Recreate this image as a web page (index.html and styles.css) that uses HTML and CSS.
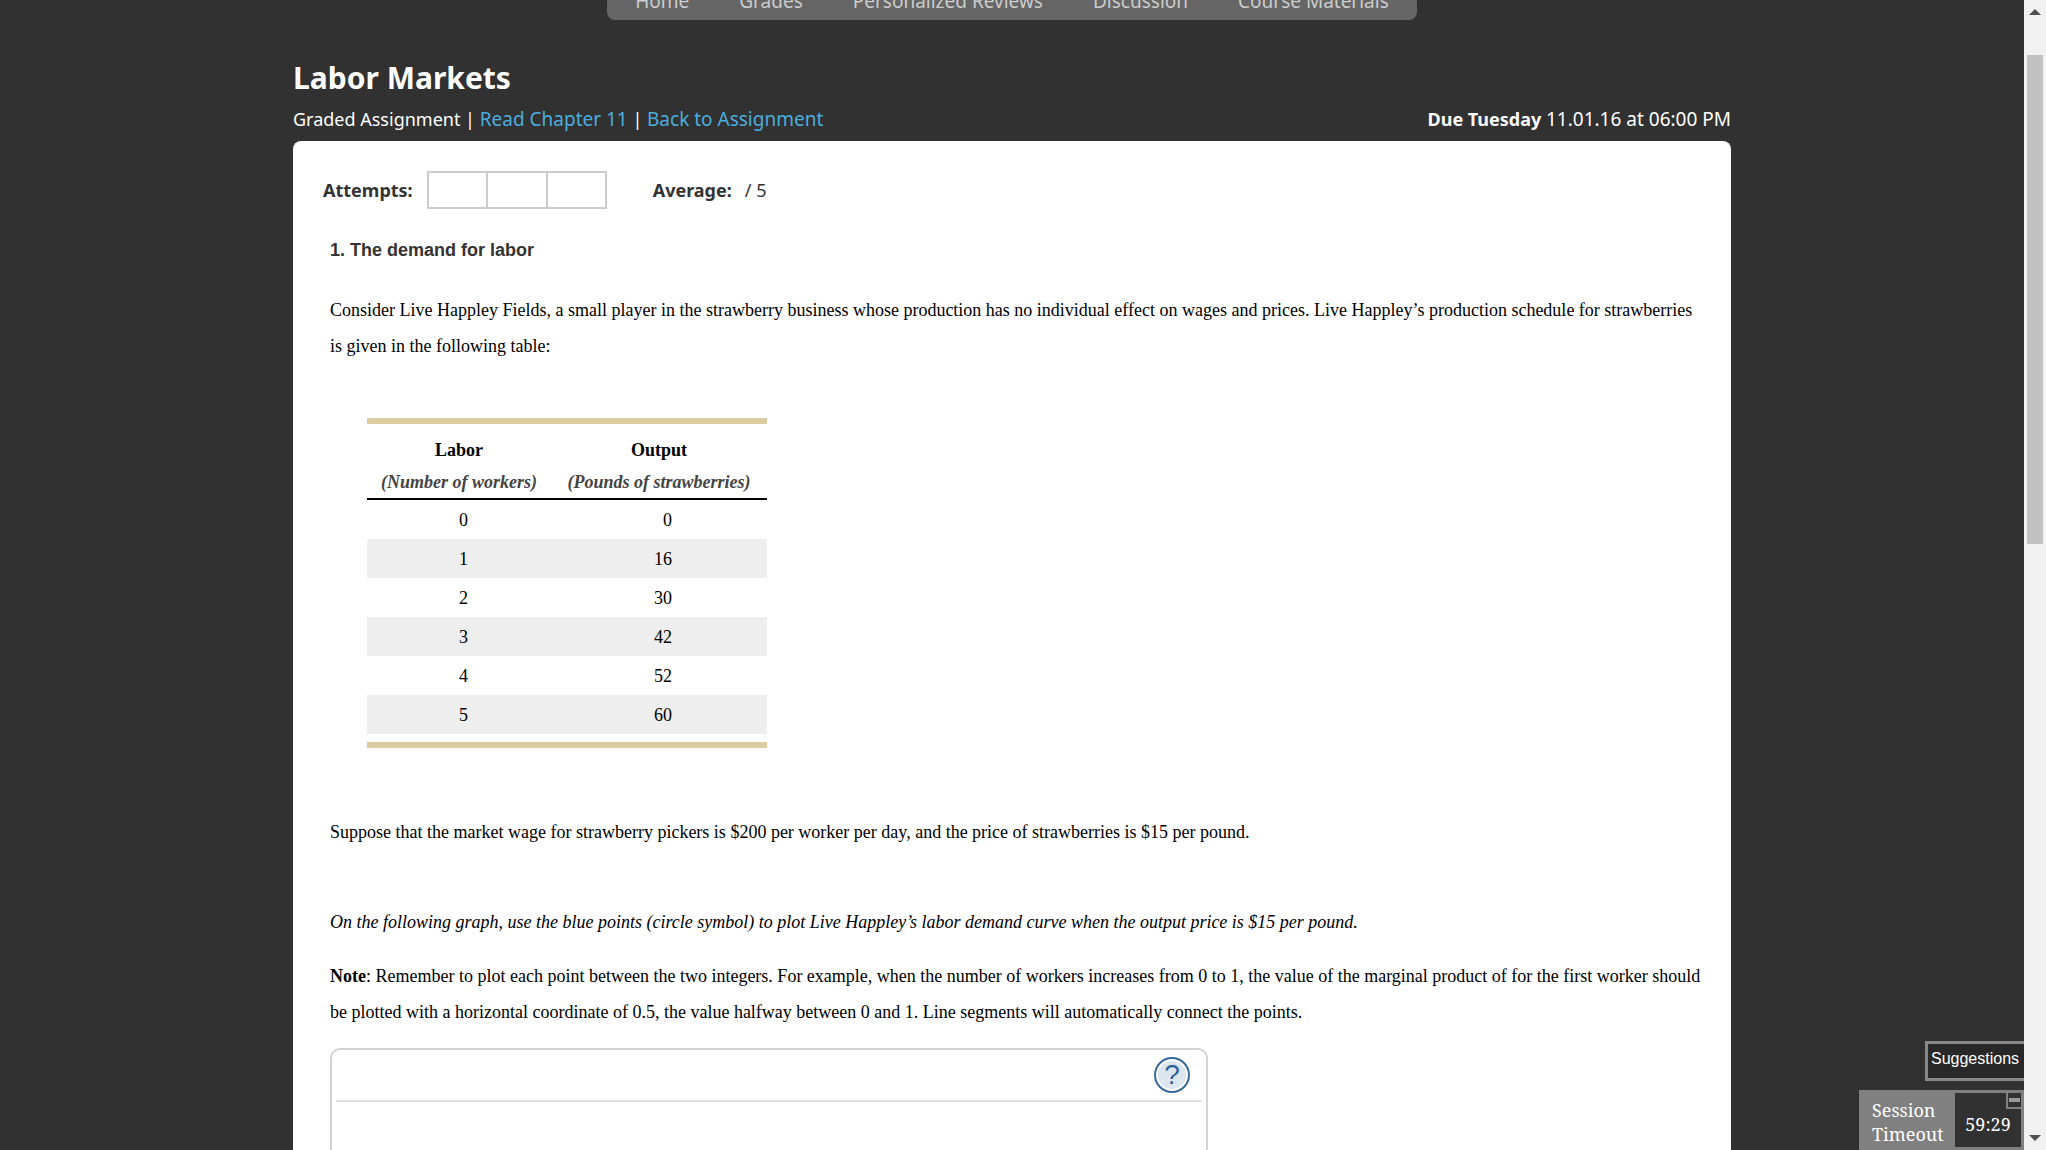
FILE: index.html
```html
<!DOCTYPE html>
<html lang="en">
<head>
    <meta charset="UTF-8">
    <title>Labor Markets</title>
    <link rel="stylesheet" href="styles.css">
</head>
<body>
    <div class="page">
        <nav class="main-nav">
            <a href="#">Home</a>
            <a href="#">Grades</a>
            <a href="#">Personalized Reviews</a>
            <a href="#">Discussion</a>
            <a href="#">Course Materials</a>
        </nav>

        <div class="container">
            <header class="assignment-header">
                <h1>Labor Markets</h1>
                <div class="assignment-info">
                    <div>Graded Assignment | <a href="#">Read Chapter 11</a> | <a href="#">Back to Assignment</a></div>
                    <div><strong>Due Tuesday</strong> <span class="due-date">11.01.16 at 06:00 PM</span></div>
                </div>
            </header>

            <main class="panel">
                <div class="score">
                    <span class="score-label">Attempts:</span>
                    <div class="attempts">
                        <span></span>
                        <span></span>
                        <span></span>
                    </div>
                    <span class="score-label">Average:</span>
                    <span class="average">/ 5</span>
                </div>

                <div class="question">
                    <h2>1. The demand for labor</h2>
                    <p>Consider Live Happley Fields, a small player in the strawberry business whose production has no individual effect on wages and prices. Live Happley’s production schedule for strawberries is given in the following table:</p>

                    <table>
                        <thead>
                            <tr>
                                <th>Labor<em>(Number of workers)</em></th>
                                <th>Output<em>(Pounds of strawberries)</em></th>
                            </tr>
                        </thead>
                        <tbody>
                            <tr><td>0</td><td>0</td></tr>
                            <tr><td>1</td><td>16</td></tr>
                            <tr><td>2</td><td>30</td></tr>
                            <tr><td>3</td><td>42</td></tr>
                            <tr><td>4</td><td>52</td></tr>
                            <tr><td>5</td><td>60</td></tr>
                        </tbody>
                    </table>

                    <p class="setup">Suppose that the market wage for strawberry pickers is $200 per worker per day, and the price of strawberries is $15 per pound.</p>
                    <p><em>On the following graph, use the blue points (circle symbol) to plot Live Happley’s labor demand curve when the output price is $15 per pound.</em></p>
                    <p><strong>Note</strong>: Remember to plot each point between the two integers. For example, when the number of workers increases from 0 to 1, the value of the marginal product of for the first worker should be plotted with a horizontal coordinate of 0.5, the value halfway between 0 and 1. Line segments will automatically connect the points.</p>

                    <section class="graph">
                        <div class="graph-toolbar">
                            <button type="button" class="help">?</button>
                        </div>
                    </section>
                </div>
            </main>
        </div>

        <button type="button" class="suggestions">Suggestions</button>
        <div class="session">
            <div class="session-label">Session<br>Timeout</div>
            <div class="session-time">59:29
                <button type="button" class="minimize" aria-label="Minimize"></button>
            </div>
        </div>
    </div>

    <div class="scrollbar">
        <svg width="12" height="6" viewBox="0 0 12 6"><path d="M6 0l6 6H0z"/></svg>
        <div class="scroll-track"><div class="scroll-thumb"></div></div>
        <svg width="12" height="6" viewBox="0 0 12 6"><path d="M6 6l6-6H0z"/></svg>
    </div>
</body>
</html>
```

FILE: styles.css
```css
* { box-sizing: border-box; }
body { margin: 0; height: 100vh; display: flex; overflow: hidden; background-color: #313131; font-family: "Noto Sans", sans-serif; font-size: 18px; color: #fff; }
a { color: #4badde; text-decoration: none; }
button { font: inherit; padding: 0; cursor: pointer; }

.page { flex: 1; position: relative; overflow: hidden; }

/* navigation is partly scrolled out of view */
.main-nav { width: fit-content; margin: -24px auto 0; padding: 9px 28px 3px; display: flex; gap: 50px; font-size: 19px; line-height: 32px; background-color: #666; border-radius: 0 0 8px 8px; }
.main-nav a { color: #ccc; }

.container { width: 95%; max-width: 1438px; margin: 0 auto; }
.assignment-header { padding-top: 32px; }
h1 { margin: 0; font-size: 30px; line-height: 52px; }
.assignment-info { display: flex; justify-content: space-between; padding-bottom: 7px; line-height: 30px; }
.assignment-info a, .due-date { font-size: 19px; }

.panel { background-color: #fff; color: #333; border-radius: 8px 8px 0 0; padding: 30px 30px 120px; }
.score { display: flex; align-items: center; }
.score-label { font-weight: bold; }
.attempts { display: flex; margin: 0 46px 0 14px; }
.attempts span { width: 60px; height: 38px; border: 2px solid #ccc; border-left-width: 1px; border-right-width: 1px; }
.attempts span:first-child { border-left-width: 2px; }
.attempts span:last-child { border-right-width: 2px; }
.average { margin-left: 13px; }

.question { padding-left: 7px; font-family: "Liberation Serif", serif; line-height: 36px; color: #000; }
h2 { margin: 23px 0 24px; font-family: "Liberation Sans", sans-serif; font-size: 18px; color: #333; }
p { margin: 0 0 18px; }

table { width: 400px; margin: 54px 0 66px 37px; border-collapse: separate; border-spacing: 0; border-top: 6px solid #dacda1; border-bottom: 6px solid #dacda1; padding-bottom: 8px; }
th { padding: 10px 0 0; line-height: 32px; border-bottom: 2px solid #000; }
th:first-child { width: 184px; }
th em { display: block; line-height: 32px; color: #444; }
td { padding: 0; height: 39px; text-align: right; }
td:first-child { padding-right: 83px; }
td:last-child { padding-right: 95px; }
tbody tr:nth-child(even) { background-color: #eee; }
.setup { margin-bottom: 54px; }

.graph { max-width: 878px; height: 400px; padding: 0 4px; border: 2px solid #d3d3d3; border-radius: 10px; }
.graph-toolbar { display: flex; justify-content: flex-end; align-items: center; height: 52px; padding-right: 12px; border-bottom: 2px solid #e2e2e2; }
.help { width: 36px; height: 36px; border: 2px solid #39699b; border-radius: 50%; background-color: #dde6ee; box-shadow: inset 0 0 0 2px #fff; color: #2f6396; font: 28px/30px "Liberation Sans", sans-serif; }

.suggestions { position: absolute; right: -3px; bottom: 69px; width: 102px; height: 40px; padding: 0 8px 5px 3px; border: 3px solid #888; background-color: #282828; color: #fff; font: 16px "Liberation Sans", sans-serif; }
.session { position: absolute; right: 0; bottom: 0; width: 165px; height: 60px; padding: 3px; display: flex; justify-content: space-between; background-color: #808080; font: 18px/24px "Noto Serif", "Liberation Serif", serif; }
.session-label { padding: 5px 0 0 10px; }
.session-time { position: relative; width: 66px; line-height: 62px; text-align: center; background-color: #313131; }
.minimize { position: absolute; top: 0; right: 0; width: 15px; height: 16px; border: 2px solid #808080; border-width: 0 0 2px 2px; background-color: #313131; }
.minimize::before { content: ""; display: block; height: 4px; margin: 0 1px; background-color: #999; }

.scrollbar { width: 22px; padding: 9px 3px; display: flex; flex-direction: column; align-items: center; background-color: #f1f1f1; }
.scrollbar svg { fill: #505050; }
.scroll-track { flex: 1; align-self: stretch; padding: 40px 0; }
.scroll-thumb { height: 47%; background-color: #c1c1c1; }
```
